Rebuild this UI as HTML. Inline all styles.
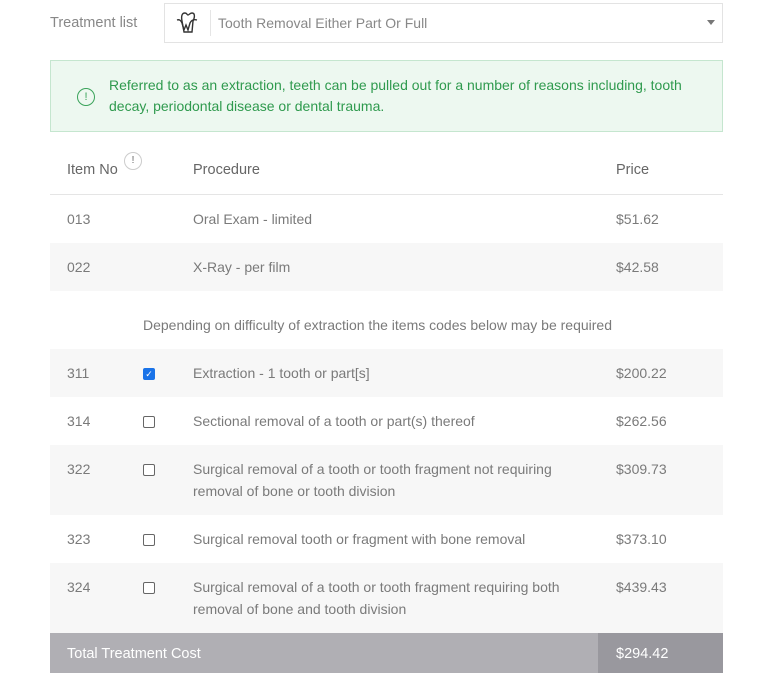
<!DOCTYPE html>
<html><head><style>
body{margin:0;background:#fff;font-family:"Liberation Sans",sans-serif;color:#7a7a7a;font-size:14px;width:768px;height:689px;overflow:hidden;position:relative}
.abs{position:absolute}
.row{position:absolute;left:50px;width:673px}
.row span{position:absolute}
.g{background:#f7f7f7}
.cb{position:absolute;left:93px;width:10px;height:10px;border:1px solid #666;border-radius:2px;background:#fff}
</style></head><body>
<div class="abs" style="left:50px;top:15px;font-size:14.5px;color:#888">Treatment list</div>
<div class="abs" style="left:164px;top:3px;width:557px;height:38px;border:1px solid #e3e3e3;background:#fff">
 <div class="abs" style="left:45px;top:6px;width:1px;height:26px;background:#e5e5e5"></div>
 <svg class="abs" style="left:8px;top:6px" width="30" height="26" viewBox="0 0 30 26" fill="none" stroke="#333" stroke-width="1.4">
  <path d="M4 10 C7 9 8 11 9 13 L11 20 L13 15 L15 20 L17 13 C18 11 20 9 24 10"/>
  <path d="M9 11 C8 6 9 3 12 3 C14 3 14 5 15 5 C16 5 17 3 19 3 C22 3 22 7 20 11 L19 22 L11 22 Z"/>
 </svg>
 <div class="abs" style="left:53px;top:11px;font-size:14px;color:#888">Tooth Removal Either Part Or Full</div>
 <div class="abs" style="right:7px;top:16px;width:0;height:0;border-left:4px solid transparent;border-right:4px solid transparent;border-top:5px solid #777"></div>
</div>
<div class="abs" style="left:50px;top:60px;width:671px;height:70px;border:1px solid #c5e6cf;background:#edf8f0"></div>
<div class="abs" style="left:77px;top:88px;width:16px;height:16px;border:1.3px solid #3aa35a;border-radius:50%;color:#3aa35a;font-size:11px;text-align:center;line-height:16px">!</div>
<div class="abs" style="left:109px;top:75px;width:600px;color:#2f9a4e;font-size:14px;line-height:21px">Referred to as an extraction, teeth can be pulled out for a number of reasons including, tooth decay, periodontal disease or dental trauma.</div>

<div class="row" style="top:145px;height:49px;border-bottom:1px solid #e5e5e5;color:#666;font-size:14.5px">
 <span style="left:17px;top:17px">Item No</span>
 <span style="left:74px;top:7px;width:16px;height:16px;border:1px solid #ccc;border-radius:50%;font-size:10px;text-align:center;line-height:15px">!</span>
 <span style="left:143px;top:17px">Procedure</span>
 <span style="left:566px;top:17px">Price</span>
</div>
<div class="row" style="top:195px;height:48px"><span style="left:17px;top:16px">013</span><span style="left:143px;top:16px">Oral Exam - limited</span><span style="left:566px;top:16px">$51.62</span></div>
<div class="row g" style="top:243px;height:48px"><span style="left:17px;top:16px">022</span><span style="left:143px;top:16px">X-Ray - per film</span><span style="left:566px;top:16px">$42.58</span></div>
<div class="abs" style="left:143px;top:317px">Depending on difficulty of extraction the items codes below may be required</div>
<div class="row g" style="top:349px;height:48px"><span style="left:17px;top:16px">311</span><span class="cb" style="top:19px;background:#1a73e8;border-color:#1a73e8;color:#fff;font-size:9px;line-height:10px;text-align:center">✓</span><span style="left:143px;top:16px">Extraction - 1 tooth or part[s]</span><span style="left:566px;top:16px">$200.22</span></div>
<div class="row" style="top:397px;height:48px"><span style="left:17px;top:16px">314</span><span class="cb" style="top:19px"></span><span style="left:143px;top:16px">Sectional removal of a tooth or part(s) thereof</span><span style="left:566px;top:16px">$262.56</span></div>
<div class="row g" style="top:445px;height:70px"><span style="left:17px;top:16px">322</span><span class="cb" style="top:19px"></span><span style="left:143px;width:400px;line-height:22px;top:13px">Surgical removal of a tooth or tooth fragment not requiring removal of bone or tooth division</span><span style="left:566px;top:16px">$309.73</span></div>
<div class="row" style="top:515px;height:48px"><span style="left:17px;top:16px">323</span><span class="cb" style="top:19px"></span><span style="left:143px;top:16px">Surgical removal tooth or fragment with bone removal</span><span style="left:566px;top:16px">$373.10</span></div>
<div class="row g" style="top:563px;height:70px"><span style="left:17px;top:16px">324</span><span class="cb" style="top:19px"></span><span style="left:143px;top:13px;width:400px;line-height:22px">Surgical removal of a tooth or tooth fragment requiring both removal of bone and tooth division</span><span style="left:566px;top:16px">$439.43</span></div>
<div class="row" style="top:633px;height:40px;background:#b0afb4;color:#fff;font-size:14.5px"><span style="left:17px;top:13px">Total Treatment Cost</span><span style="left:548px;top:0;width:125px;height:40px;background:#99989e"></span><span style="left:566px;top:13px">$294.42</span></div>
</body></html>
